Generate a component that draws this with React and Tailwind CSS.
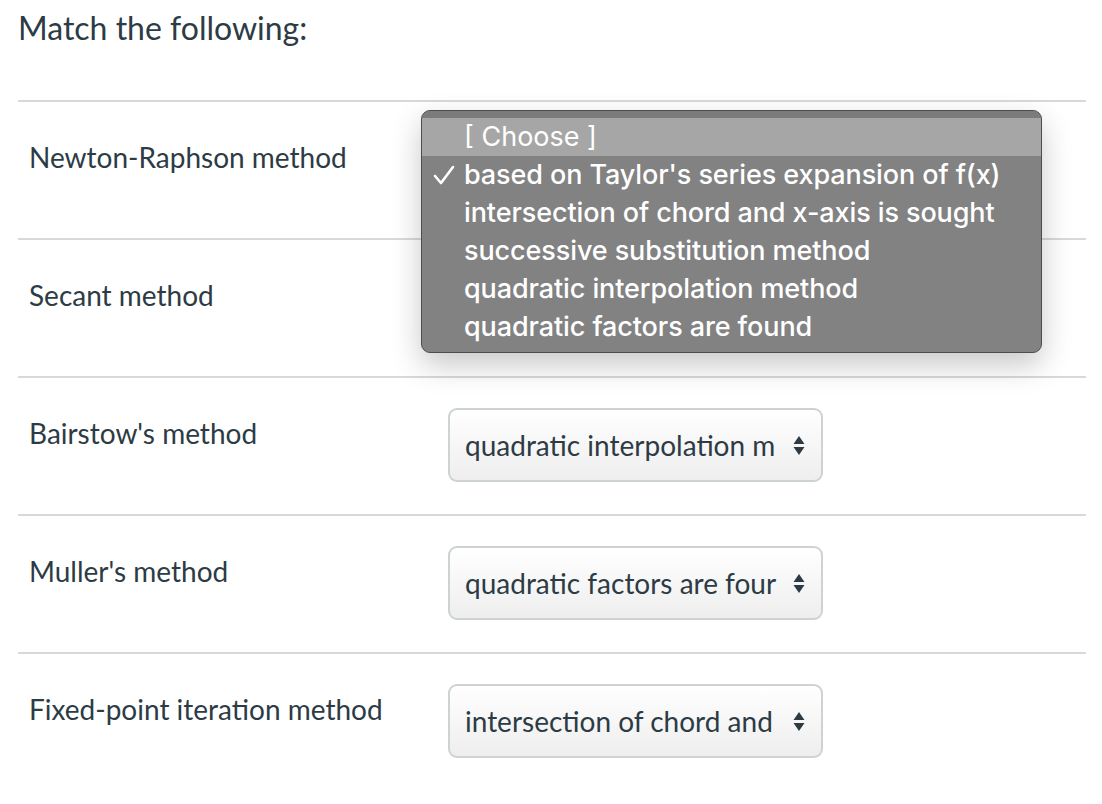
import React from "react";

const rows = [
  { label: "Newton-Raphson method", value: "[ Choose ]" },
  { label: "Secant method", value: "[ Choose ]" },
  { label: "Bairstow's method", value: "quadratic interpolation m" },
  { label: "Muller's method", value: "quadratic factors are four" },
  { label: "Fixed-point iteration method", value: "intersection of chord and" },
];

const options = [
  "based on Taylor's series expansion of f(x)",
  "intersection of chord and x-axis is sought",
  "successive substitution method",
  "quadratic interpolation method",
  "quadratic factors are found",
];

function Arrows() {
  return (
    <svg width="12" height="21" viewBox="0 0 12 21" className="shrink-0">
      <path d="M6 1 L11.5 9 L0.5 9 Z" fill="#2d3b45" />
      <path d="M6 20 L11.5 12 L0.5 12 Z" fill="#2d3b45" />
    </svg>
  );
}

function Check() {
  return (
    <svg width="22" height="20" viewBox="0 0 22 20">
      <path d="M2 11 L8 18 L20 2" fill="none" stroke="white" strokeWidth="2.6" strokeLinecap="round" strokeLinejoin="round" />
    </svg>
  );
}

function Select({ value }) {
  return (
    <div className="w-[375px] h-[74px] rounded-[9px] border-2 border-[#cdd2d5] bg-gradient-to-b from-[#ffffff] to-[#eeeeee] flex items-center pl-[15px] pr-[16px]">
      <span className="flex-1 text-[28px] text-[#2d3b45] whitespace-nowrap overflow-hidden">{value}</span>
      <Arrows />
    </div>
  );
}

export default function App() {
  return (
    <div className="relative w-[1102px] h-[804px] bg-white overflow-hidden" style={{ fontFamily: "Lato, 'Noto Sans', sans-serif" }}>
      <h1 className="pl-[18px] pt-[8px] text-[32px] leading-[40px] text-[#2d3b45] font-normal">Match the following:</h1>
      <div className="mt-[52px] ml-[18px] w-[1068px]">
        {rows.map((r) => (
          <div key={r.label} className="h-[138px] border-t-2 border-[#d7dadc] flex">
            <div className="w-[419px] pl-[11px] pt-[37px] text-[28px] leading-[36px] text-[#2d3b45]">{r.label}</div>
            <div className="pt-[30px] pl-[11px]">
              <Select value={r.value} />
            </div>
          </div>
        ))}
      </div>

      <div
        className="absolute left-[421px] top-[110px] w-[621px] h-[243px] rounded-[9px] border-[1.5px] border-[#4d4d4d] bg-[#828282] overflow-hidden shadow-[0_12px_30px_rgba(0,0,0,0.22)] text-white"
        style={{ fontFamily: "Inter, 'Liberation Sans', sans-serif" }}
      >
        <div className="h-[7px] bg-[#7b7b7b]" />
        <div className="h-[38px] bg-[#a6a6a6] flex items-center pl-[42px] text-[27px] leading-[38px]">[ Choose ]</div>
        {options.map((o, i) => (
          <div key={o} className="h-[38px] flex items-center text-[27px] leading-[38px] font-medium tracking-[-0.1px]">
            <span className="w-[42px] pl-[11px] flex items-center">{i === 0 ? <Check /> : null}</span>
            <span className="whitespace-nowrap">{o}</span>
          </div>
        ))}
      </div>
    </div>
  );
}
